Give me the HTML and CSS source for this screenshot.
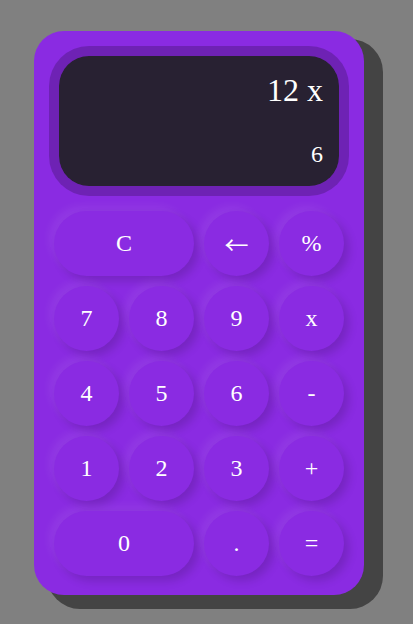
FILE: index.html
```html
<!DOCTYPE html>
<html lang="en">
<head>
    <meta charset="UTF-8">
    <meta name="viewport" content="width=device-width, initial-scale=1.0">
    <title>Calculator</title>
    <link rel="stylesheet" href="styles.css">
</head>
<body>
    <div class="calculator">
        <div class="display">
            <div class="previous">12 x</div>
            <div class="current">6</div>
        </div>
        <div class="keys">
            <button class="key wide">C</button>
            <button class="key"><span class="arrow">&larr;</span></button>
            <button class="key">%</button>

            <button class="key">7</button>
            <button class="key">8</button>
            <button class="key">9</button>
            <button class="key">x</button>

            <button class="key">4</button>
            <button class="key">5</button>
            <button class="key">6</button>
            <button class="key">-</button>

            <button class="key">1</button>
            <button class="key">2</button>
            <button class="key">3</button>
            <button class="key">+</button>

            <button class="key wide">0</button>
            <button class="key">.</button>
            <button class="key">=</button>
        </div>
    </div>
</body>
</html>
```

FILE: styles.css
```css
html {
    height: 100%;
}
body {
    margin: 0;
    min-height: 100%;
    box-sizing: border-box;
    padding: 31px 0 0 34px;
    background-color: #808080;
    font-family: "Liberation Serif", "Times New Roman", serif;
}
.calculator {
    width: 330px;
    box-sizing: border-box;
    padding: 15px;
    background-color: #8a2be2;
    border-radius: 30px;
    box-shadow: 16px 11px 0 3px #444;
}
.display {
    height: 150px;
    box-sizing: border-box;
    border: 10px solid rgba(0, 0, 0, 0.2);
    border-radius: 40px;
    background-color: #282132;
    background-clip: padding-box;
    padding: 16px 16px 18px;
    display: flex;
    flex-direction: column;
    justify-content: space-between;
    align-items: flex-end;
    color: #fff;
}
.previous {
    font-size: 32px;
}
.current {
    font-size: 24px;
}
.keys {
    display: grid;
    grid-template-columns: repeat(4, 65px);
    grid-auto-rows: 65px;
    gap: 10px;
    margin: 15px 5px 4px;
}
.key {
    border: none;
    border-radius: 35px;
    background-color: #8a2be2;
    color: #fff;
    font-family: inherit;
    font-size: 24px;
    padding: 0;
    cursor: pointer;
    box-shadow: 5px 5px 10px rgba(0, 0, 0, 0.15), -5px -5px 10px rgba(255, 255, 255, 0.07);
}
.key.wide {
    grid-column: span 2;
}
.arrow {
    font-family: "Noto Sans CJK SC", sans-serif;
}
```
